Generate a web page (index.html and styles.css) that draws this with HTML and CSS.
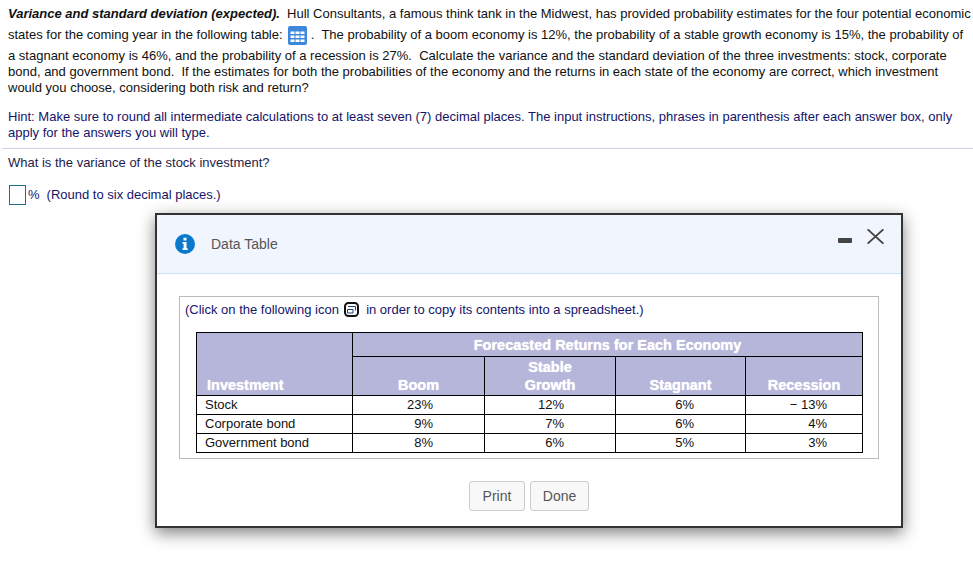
FILE: index.html
```html
<!DOCTYPE html>
<html lang="en">
<head>
<meta charset="utf-8">
<title>Data Table</title>
<link rel="stylesheet" href="styles.css">
</head>
<body>
<main class="question">
  <div class="intro">
    <p class="line-first"><b class="lead">Variance and standard deviation (expected).</b>&nbsp; Hull Consultants, a famous think tank in the Midwest, has provided probability estimates for the four potential economic</p>
    <p class="line-icon">states for the coming year in the following table:
    <svg class="grid-icon" viewBox="0 0 19 19" aria-hidden="true"><rect width="19" height="19" rx="2" fill="#3d87dc"/><path d="M2.500 5.500h4v2.500h-4zM7.500 5.500h4v2.500h-4zM12.500 5.500h4v2.500h-4zM2.500 9.500h4v2.500h-4zM7.500 9.500h4v2.500h-4zM12.500 9.500h4v2.500h-4zM2.500 13.500h4v2.500h-4zM7.500 13.500h4v2.500h-4zM12.500 13.500h4v2.500h-4z" fill="#fff"/></svg> .&nbsp; The probability of a boom economy is 12%, the probability of a stable growth economy is 15%, the probability of</p>
    <p>a stagnant economy is 46%, and the probability of a recession is 27%.&nbsp; Calculate the variance and the standard deviation of the three investments: stock, corporate<br>bond, and government bond.&nbsp; If the estimates for both the probabilities of the economy and the returns in each state of the economy are correct, which investment<br>would you choose, considering both risk and return?</p>
  </div>
  <p class="hint">Hint: Make sure to round all intermediate calculations to at least seven (7) decimal places. The input instructions, phrases in parenthesis after each answer box, only<br>apply for the answers you will type.</p>
  <hr class="rule">
  <p class="ask">What is the variance of the stock investment?</p>
  <div class="answer"><span class="answer-box"></span><span class="pct">%</span><span class="note">(Round to six decimal places.)</span></div>
</main>

<section class="modal">
  <header class="modal-head">
    <svg class="info-icon" viewBox="0 0 20 20" aria-hidden="true"><circle cx="10" cy="10" r="10" fill="#0b79cb"/><path d="M8.500 3.800h3v2.700h-3zM7.500 8h4v6.300h1.200V16H7.500v-1.700h1.100V9.700H7.500z" fill="#fff"/></svg>
    <span class="modal-title">Data Table</span>
    <span class="win-min"></span>
    <svg class="win-close" viewBox="0 0 17 15" aria-hidden="true"><path d="M.6.300 16.400 14.700M16.400.300.6 14.700" stroke="#444" stroke-width="1.800" fill="none"/></svg>
  </header>
  <div class="modal-body">
    <div class="sheet">
      <p class="copy-line">(Click on the following icon
        <svg class="copy-icon" viewBox="0 0 15 15" aria-hidden="true"><rect x="1" y="1" width="13" height="13" rx="3.500" fill="#fff" stroke="#111" stroke-width="2"/><path d="M4 4.500h7.500v4M3.500 7.500h5.500v3.500H3.500z" fill="none" stroke="#1d3f78" stroke-width="1"/></svg>
        in order to copy its contents into a spreadsheet.)</p>
      <table class="returns">
        <colgroup><col class="c-inv"><col class="c-boom"><col class="c-stable"><col class="c-stag"><col class="c-rec"></colgroup>
        <thead>
          <tr class="head-top"><th class="th-left"></th><th colspan="4">Forecasted Returns for Each Economy</th></tr>
          <tr class="head-sub"><th class="th-left th-inv">Investment</th><th>Boom</th><th>Stable<br>Growth</th><th>Stagnant</th><th>Recession</th></tr>
        </thead>
        <tbody>
          <tr><td class="name">Stock</td><td>23%</td><td>12%</td><td>6%</td><td class="last">− 13%</td></tr>
          <tr><td class="name">Corporate bond</td><td>9%</td><td>7%</td><td>6%</td><td class="last">4%</td></tr>
          <tr><td class="name">Government bond</td><td>8%</td><td>6%</td><td>5%</td><td class="last">3%</td></tr>
        </tbody>
      </table>
    </div>
    <div class="actions"><button class="btn btn-print" type="button">Print</button><button class="btn btn-done" type="button">Done</button></div>
  </div>
</section>
</body>
</html>
```
FILE: styles.css
```css
* { box-sizing: border-box; }
html, body { margin: 0; padding: 0; }
body {
  width: 973px;
  height: 574px;
  overflow: hidden;
  background: #fff;
  font-family: "Liberation Sans", Arial, sans-serif;
  font-size: 13px;
  line-height: 16px;
  color: #111;
  position: relative;
}
p { margin: 0; }
.question { padding: 6px 0 0 8px; }
.intro { white-space: nowrap; }
.line-first { height: 16px; margin-bottom: 4px; }
.line-icon { height: 16px; margin-bottom: 6px; }
.lead { font-style: italic; }
.grid-icon { display: inline-block; width: 19px; height: 19px; vertical-align: middle; margin: 0 0 1px 2px; }
.hint { margin-top: 13px; color: #14146a; white-space: nowrap; }
.rule { margin: 7px 0 6px -6px; border: 0; border-top: 1px solid #ced3e2; width: 971px; }
.ask { color: #1c1c4a; }
.answer { display: flex; align-items: center; margin-top: 14px; height: 20px; margin-left: 1px; color: #14146a; }
.answer-box { width: 17px; height: 20px; border: 1px solid #1a6f8f; background: #fff; }
.pct { margin-left: 2px; }
.note { margin-left: 7px; }

.modal {
  position: absolute;
  left: 155px;
  top: 213px;
  width: 748px;
  height: 315px;
  background: #fff;
  border: 2px solid #333;
  box-shadow: 0 5px 15px rgba(0, 0, 0, .5);
}
.modal-head {
  position: relative;
  display: flex;
  align-items: center;
  height: 59px;
  background: #f1f6fe;
  border-bottom: 1px solid #c9e2f8;
  padding-left: 18px;
}
.info-icon { width: 20px; height: 20px; }
.modal-title { margin-left: 16px; font-size: 14px; color: #555; }
.win-min { position: absolute; left: 681px; top: 23px; width: 14px; height: 5px; border-radius: 1px; background: #444; }
.win-close { position: absolute; left: 710px; top: 14px; width: 17px; height: 15px; }
.modal-body { padding: 22px 22px 0; }
.sheet { width: 700px; height: 163px; border: 1px solid #bbb; padding: 5px 0 0 5px; }
.copy-line { color: #14146a; white-space: nowrap; }
.copy-icon { display: inline-block; width: 15px; height: 15px; vertical-align: -3px; margin: 0 4px 0 1px; }
.returns {
  border-collapse: collapse;
  table-layout: fixed;
  width: 666px;
  margin: 14px 0 0 11px;
}
.c-inv { width: 156px; }
.c-boom { width: 132px; }
.c-stable { width: 131px; }
.c-stag { width: 130px; }
.c-rec { width: 117px; }
.returns th, .returns td { border: 1px solid #000; padding: 0; text-align: center; }
.returns th {
  background: #b6b6da;
  color: #fff;
  font-size: 14.500px;
  line-height: 18px;
  vertical-align: bottom;
  text-shadow: 0 0 1px #fff;
}
.head-top th { height: 24px; vertical-align: middle; }
.head-sub th { height: 39px; padding-bottom: 1px; }
.returns .th-left { text-align: left; padding-left: 10px; }
.head-top .th-left { border-bottom: 0; }
.head-sub .th-left { border-top: 0; }
.returns td { height: 19px; font-size: 13px; line-height: 16px; color: #111; text-align: right; padding-right: 51px; }
.returns td.last { padding-right: 35px; }
.returns td.name { text-align: left; padding: 0 0 0 8px; }
.actions { display: flex; justify-content: center; gap: 5px; margin-top: 22px; }
.btn {
  height: 30px;
  padding: 0;
  background: #f8f8f8;
  border: 1px solid #ccc;
  border-radius: 3px;
  font: 14px/20px "Liberation Sans", Arial, sans-serif;
  color: #555;
}
.btn-print { width: 56px; }
.btn-done { width: 59px; }
```
